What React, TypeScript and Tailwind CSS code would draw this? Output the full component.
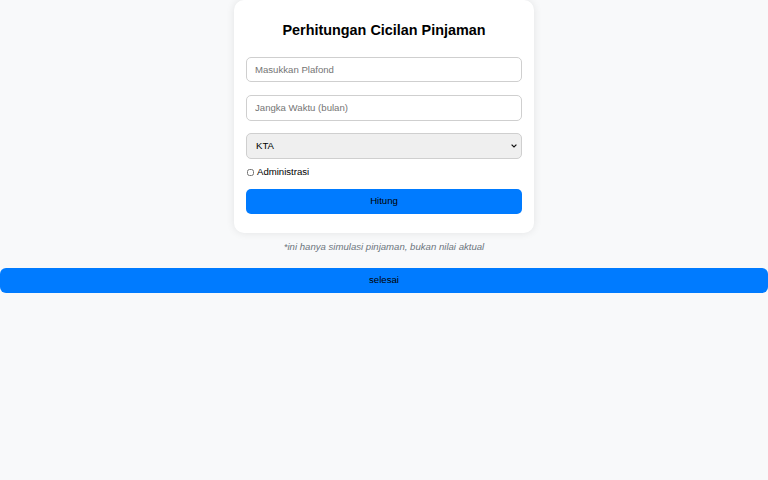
import { useState } from "react";

export default function App() {
  const [admin, setAdmin] = useState(false);

  return (
    <div
      className="min-h-[480px] w-full bg-[#f8f9fa] text-[9.6px] text-black"
      style={{ fontFamily: '"Liberation Sans", Arial, sans-serif' }}
    >
      <div className="mx-auto flex w-[300px] flex-col rounded-[10px] bg-white px-[12px] pt-[12px] pb-[18.7px] shadow-[0_0_8px_rgba(0,0,0,0.09)]">
        <h2 className="mt-[10px] text-center text-[14.4px] leading-[16px] font-bold">
          Perhitungan Cicilan Pinjaman
        </h2>

        <input
          type="number"
          placeholder="Masukkan Plafond"
          className="mt-[18.7px] h-[25.3px] rounded-[5px] border border-[#cfcfcf] bg-white px-[8px] text-[9.6px] placeholder:text-[#757575] outline-none"
        />

        <input
          type="number"
          placeholder="Jangka Waktu (bulan)"
          className="mt-[13px] h-[25.6px] rounded-[5px] border border-[#cfcfcf] bg-white px-[8px] text-[9.6px] placeholder:text-[#757575] outline-none"
        />

        <div className="relative mt-[12.4px]">
          <select className="block h-[26px] w-full appearance-none rounded-[5px] border border-[#cfcfcf] bg-[#efefef] pl-[9px] pr-[16px] text-[9.6px] outline-none">
            <option>KTA</option>
            <option>KPR</option>
            <option>KKB</option>
          </select>
          <svg
            viewBox="0 0 6 4"
            className="pointer-events-none absolute top-[11.5px] right-[5px] h-[4px] w-[6px]"
          >
            <path d="M0.6 0.6 L3 3 L5.4 0.6" fill="none" stroke="#111" strokeWidth="1.2" />
          </svg>
        </div>

        <label className="mt-[7.5px] flex h-[12px] items-center gap-[3px] text-[9.6px] leading-[12px]">
          <input
            type="checkbox"
            checked={admin}
            onChange={(e) => setAdmin(e.target.checked)}
            className="m-0 ml-[0.5px] h-[7.5px] w-[7.5px]"
          />
          Administrasi
        </label>

        <button className="mt-[10.8px] h-[24.7px] rounded-[5px] bg-[#007bff] text-[9.6px] text-black">
          Hitung
        </button>
      </div>

      <p className="mt-[8px] text-center text-[9.6px] leading-[11px] text-[#6c757d] italic">
        *ini hanya simulasi pinjaman, bukan nilai aktual
      </p>

      <button className="mt-[16.3px] block h-[25px] w-full rounded-[6px] bg-[#007bff] text-[9.6px] text-black">
        selesai
      </button>
    </div>
  );
}
